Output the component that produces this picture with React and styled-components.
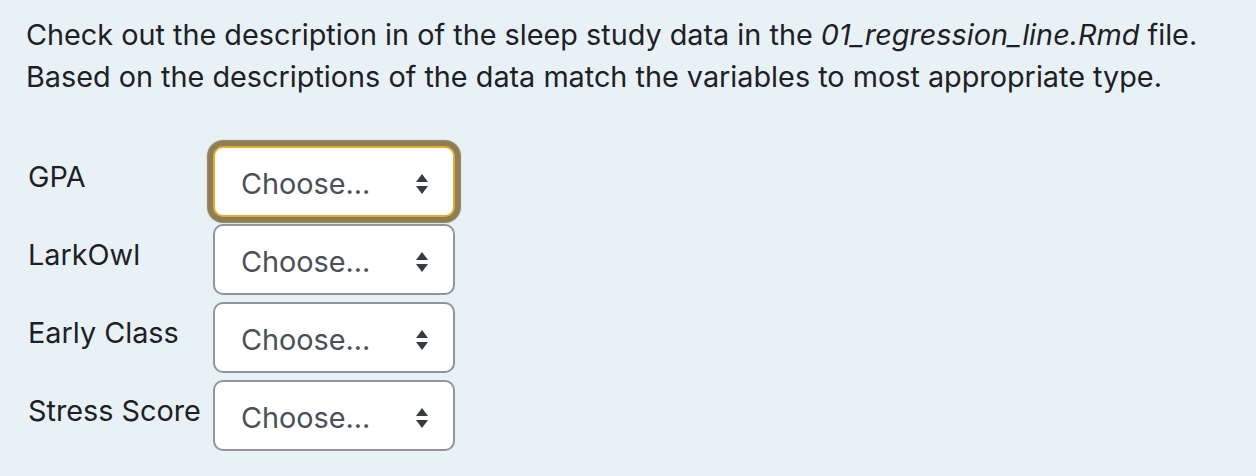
import styled, { createGlobalStyle } from "styled-components";

const GlobalStyle = createGlobalStyle`
  html, body {
    margin: 0;
    padding: 0;
    background: #e8f2f6;
  }
  body {
    font-family: Inter, "Liberation Sans", Arial, sans-serif;
    color: #1d2125;
  }
`;

const Container = styled.div`
  width: 1256px;
  height: 476px;
  box-sizing: border-box;
  padding: 14px 26px 0;
  background: #e8f2f6;
`;

const Prompt = styled.p`
  margin: 0 0 48px;
  font-size: 28.8px;
  line-height: 42px;
`;

const MatchTable = styled.div`
  display: grid;
  grid-template-columns: auto auto;
  justify-content: start;
  row-gap: 7px;
  column-gap: 12px;
`;

const Label = styled.div`
  font-size: 28.8px;
  padding-top: 13px;
  padding-left: 2px;
`;

const SelectBox = styled.div`
  display: flex;
  align-items: center;
  justify-content: space-between;
  box-sizing: border-box;
  width: 242px;
  height: 71px;
  padding: 4px 24px 0 26px;
  background: #fff;
  border: 2px solid ${(p) => (p.$focused ? "#e6ac30" : "#8f959e")};
  border-radius: 10px;
  box-shadow: ${(p) => (p.$focused ? "0 0 1px 6px #8e7e54" : "none")};
  font-size: 28.8px;
  color: #495057;
`;

const Arrows = () => (
  <svg width="14" height="22" viewBox="0 0 14 22">
    <path d="M7 1 L13 9 H1 Z" fill="#343a40" />
    <path d="M7 21 L13 13 H1 Z" fill="#343a40" />
  </svg>
);

const rows = ["GPA", "LarkOwl", "Early Class", "Stress Score"];

export default function App() {
  return (
    <>
      <GlobalStyle />
      <Container>
        <Prompt>
          Check out the description in of the sleep study data in the{" "}
          <em>01_regression_line.Rmd</em> file.
          <br />
          Based on the descriptions of the data match the variables to most
          appropriate type.
        </Prompt>
        <MatchTable>
          {rows.map((r, i) => (
            <>
              <Label key={r + "l"}>{r}</Label>
              <SelectBox key={r + "s"} $focused={i === 0}>
                <span>Choose...</span>
                <Arrows />
              </SelectBox>
            </>
          ))}
        </MatchTable>
      </Container>
    </>
  );
}
